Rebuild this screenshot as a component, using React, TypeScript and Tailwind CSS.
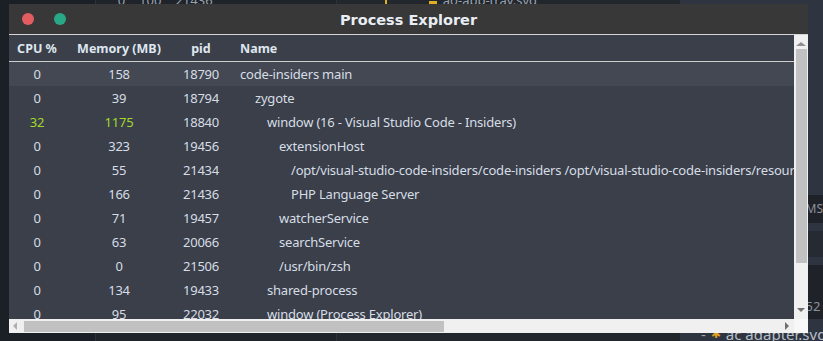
const rows = [
  { cpu: "0", mem: "158", pid: "18790", name: "code-insiders main", indent: 0 },
  { cpu: "0", mem: "39", pid: "18794", name: "zygote", indent: 1 },
  { cpu: "32", mem: "1175", pid: "18840", name: "window (16 - Visual Studio Code - Insiders)", indent: 2, hot: true },
  { cpu: "0", mem: "323", pid: "19456", name: "extensionHost", indent: 3 },
  { cpu: "0", mem: "55", pid: "21434", name: "/opt/visual-studio-code-insiders/code-insiders /opt/visual-studio-code-insiders/resources/app/extensions/node_modules", indent: 4 },
  { cpu: "0", mem: "166", pid: "21436", name: "PHP Language Server", indent: 4 },
  { cpu: "0", mem: "71", pid: "19457", name: "watcherService", indent: 3 },
  { cpu: "0", mem: "63", pid: "20066", name: "searchService", indent: 3 },
  { cpu: "0", mem: "0", pid: "21506", name: "/usr/bin/zsh", indent: 3 },
  { cpu: "0", mem: "134", pid: "19433", name: "shared-process", indent: 2 },
  { cpu: "0", mem: "95", pid: "22032", name: "window (Process Explorer)", indent: 2 },
];

const indentClass = ["pl-[231px]", "pl-[246px]", "pl-[258px]", "pl-[270px]", "pl-[282px]"];

function Row({ r, first }: { r: (typeof rows)[number]; first: boolean }) {
  const val = r.hot ? "text-[#a3d92b]" : "text-[#d6dde6]";
  return (
    <div className={`relative flex h-[24px] shrink-0 items-center whitespace-nowrap pt-[2px] ${first ? "bg-[#434852]" : ""}`}>
      <div className={`w-[56px] shrink-0 text-center ${val}`}>{r.cpu}</div>
      <div className={`w-[108px] shrink-0 text-center ${val}`}>{r.mem}</div>
      <div className="w-[56px] shrink-0 text-center text-[#d6dde6]">{r.pid}</div>
      <div className={`absolute left-0 ${indentClass[r.indent]} text-[#d6dde6]`}>{r.name}</div>
    </div>
  );
}

export default function App() {
  return (
    <div className="relative h-[341px] w-[823px] overflow-hidden bg-[#1d2128] font-['Noto_Sans',sans-serif]">
      {/* desktop behind the window */}
      <div className="flex h-full">
        <div className="w-[95px] bg-[#1b1f26]" />
        <div className="flex w-[243px] flex-col border-x border-[#2c313a] bg-[#1f232a]">
          <div className="-mt-[9px] flex gap-[14px] pl-[22px] text-[13px] text-[#9aa3ad]">
            <span>0</span>
            <span>100</span>
            <span>21436</span>
          </div>
        </div>
        <div className="flex w-[344px] flex-col bg-[#22262d]">
          <div className="-mt-[9px] flex items-center pl-[48px] text-[13px] text-[#9aa3ad]">
            <span className="mr-[4px] mt-[6px] h-[8px] w-[2px] bg-[#e0b020]" />
            <span className="ml-[38px] mr-[6px] mt-[6px] h-[6px] w-[8px] bg-[#e0b020]" />
            <span>ao-app-tray.svg</span>
          </div>
        </div>
        <div className="flex flex-1 flex-col bg-[#2e3440]">
          <div className="mt-[195px] flex h-[28px] items-center bg-[#1f2329] pl-[126px] text-[12px] text-[#8a929c]">MS</div>
          <div className="mt-[8px] h-[26px] bg-[#262b33]" />
          <div className="mt-[8px] h-[30px] bg-[#1f2329]" />
          <div className="flex h-[24px] items-center bg-[#1f2329] pl-[126px] text-[13px] text-[#8a929c]">52</div>
        </div>
      </div>
      <div className="absolute left-[701px] top-[323px] flex items-center gap-[5px] whitespace-nowrap text-[15px] leading-[22px] text-[#b7bfc8]">
        <span className="text-[#9aa3ad]">-</span>
        <span className="text-[12px] text-[#e0a020]">✱</span>
        <span>ac adapter.svg</span>
      </div>

      {/* Process Explorer window */}
      <div className="absolute left-[9px] top-[4px] flex h-[329px] w-[799px] flex-col bg-[#3a3f49]">
        <div className="relative flex h-[30px] shrink-0 items-center justify-center bg-[#383838] pt-[3px]">
          <span className="absolute left-[13px] top-[9px] h-[12px] w-[12px] rounded-full bg-[#e35c60]" />
          <span className="absolute left-[45px] top-[9px] h-[12px] w-[12px] rounded-full bg-[#29a887]" />
          <span className="font-['DejaVu_Sans',sans-serif] text-[14.5px] font-bold text-[#e8eef4]">Process Explorer</span>
        </div>
        <div className="h-px shrink-0 bg-[#d4d4d4]" />
        <div className="flex min-h-0 flex-1">
          <div className="relative min-w-0 flex-1 overflow-hidden text-[13px] tracking-[-0.2px]">
            <div className="flex h-[27px] items-center border-b border-[#cdcdcd] pt-[3px] text-[12.5px] font-bold tracking-normal text-[#dfe6ef]">
              <div className="w-[56px] text-center">CPU %</div>
              <div className="w-[108px] text-center">Memory (MB)</div>
              <div className="w-[56px] text-center">pid</div>
              <div className="pl-[11px]">Name</div>
            </div>
            <div className="flex flex-col">
              {rows.map((r, i) => (
                <Row key={r.pid} r={r} first={i === 0} />
              ))}
            </div>
          </div>
          <div className="flex w-[14px] shrink-0 flex-col items-center bg-[#f0f0f0]">
            <div className="mt-[7px] h-0 w-0 border-x-[5px] border-b-[4px] border-x-transparent border-b-[#8f8f8f]" />
            <div className="mt-[3px] h-[214px] w-[11px] bg-[#c1c1c1]" />
            <div className="mt-auto mb-[7px] h-0 w-0 border-x-[4px] border-t-[4px] border-x-transparent border-t-[#6f6f6f]" />
          </div>
        </div>
        <div className="flex h-[14px] shrink-0">
          <div className="flex flex-1 items-center bg-[#f0f0f0]">
            <div className="ml-[4px] h-0 w-0 border-y-[4px] border-r-[4px] border-y-transparent border-r-[#b0b0b0]" />
            <div className="ml-[7px] h-[11px] w-[420px] bg-[#c1c1c1]" />
            <div className="ml-auto mr-[5px] h-0 w-0 border-y-[4px] border-l-[4px] border-y-transparent border-l-[#6f6f6f]" />
          </div>
          <div className="w-[14px] bg-[#f7f7f7]" />
        </div>
      </div>
    </div>
  );
}
